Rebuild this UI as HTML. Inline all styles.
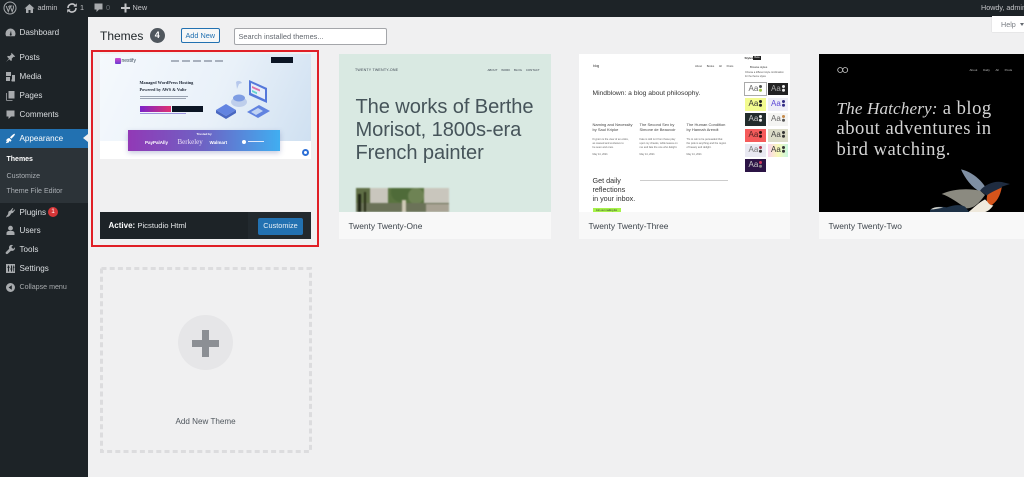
<!DOCTYPE html>
<html lang="en"><head><meta charset="utf-8"><title>Themes</title>
<style>
*{box-sizing:border-box}
html,body{margin:0;padding:0;width:1024px;height:477px;overflow:hidden;background:#f0f0f1;font-family:"Liberation Sans",sans-serif;color:#3c434a}
#w{position:absolute;left:0;top:0;width:1024px;height:477px;overflow:hidden;filter:blur(.3px)}
.a{position:absolute;white-space:nowrap}
.m{position:absolute;left:19.5px;font-size:8.1px;color:#dcdfe2;line-height:12px;white-space:nowrap}
.s{position:absolute;left:6.5px;font-size:7.1px;color:#a9aeb3;line-height:12px;white-space:nowrap}
.i{position:absolute;left:5px;width:11px;height:11px;fill:#a7aaad}
.t{position:absolute;font-size:7.3px;color:#c3c4c7;line-height:12px;white-space:nowrap;top:0}
.card{position:absolute;top:54px;height:185px;background:#fff;overflow:hidden}
.foot{position:absolute;left:0;right:0;top:158px;height:27px;background:#f8f8f8;font-size:8.4px;color:#3c434a;line-height:28px;padding-left:9.5px}
.sw{position:absolute;width:20.5px;height:12.5px;font-size:8px;line-height:12.5px;padding-left:3.5px;white-space:nowrap}
.sw span{position:absolute;left:14px;top:2.2px;width:3px;height:3px;border-radius:50%}
</style></head><body><div id="w">

<div class="a" style="left:0;top:0;width:1024px;height:16.5px;background:#1d2327"></div>
<div class="a" style="left:0;top:16px;width:88px;height:461px;background:#1d2327"></div>

<svg class="a" style="left:3px;top:1px;width:14px;height:14px" viewBox="0 0 14 14"><circle cx="7" cy="7" r="6" fill="none" stroke="#a7aaad" stroke-width="1"/><path d="M3.2 5l2.1 5.6 1.2-3.4-.9-2.2M6 5h3M7.2 5l2 5.6 1.2-3.6c.4-1.2 0-1.8-.5-2.4" fill="none" stroke="#a7aaad" stroke-width="1"/></svg>
<svg class="a" style="left:24px;top:3px;width:11px;height:11px" viewBox="0 0 11 11"><path d="M5.5 1L.5 5.5H2V10h2.5V7h2v3H9V5.5h1.5z" fill="#a7aaad"/></svg>
<div class="t" style="left:37.5px;top:2px">admin</div>
<svg class="a" style="left:65.5px;top:2px;width:12px;height:12px" viewBox="0 0 12 12"><path d="M2 6a4 4 0 0 1 7-2.6M10 6a4 4 0 0 1-7 2.6" fill="none" stroke="#c3c4c7" stroke-width="1.6"/><path d="M10.8 1.2v3.4H7.4zM1.2 10.8V7.4h3.4z" fill="#c3c4c7"/></svg>
<div class="t" style="left:80px;top:2px">1</div>
<svg class="a" style="left:92.5px;top:2px;width:11px;height:11px" viewBox="0 0 11 11"><path d="M1.5 1.5h8v6H6L3.5 10V7.5h-2z" fill="#a7aaad"/></svg>
<div class="t" style="left:106px;top:2px;color:#6c7176">0</div>
<svg class="a" style="left:119.5px;top:2px;width:11px;height:12px" viewBox="0 0 11 12"><path d="M4.5 1.5h2V5H10v2H6.5v3.5h-2V7H1V5h3.5z" fill="#c3c4c7"/></svg>
<div class="t" style="left:132.5px;top:2px">New</div>
<div class="t" style="left:981px;top:2px;font-size:7.2px">Howdy, admin</div>

<div class="a" style="left:992px;top:16px;width:36px;height:16px;background:#fff;box-shadow:0 0 1px rgba(0,0,0,.2)"></div>
<div class="a" style="left:1001px;top:18.5px;font-size:7.2px;color:#787c82;line-height:12px">Help</div>
<div class="a" style="left:1020px;top:22.5px;border:2.5px solid transparent;border-top:3px solid #646970;border-bottom:0"></div>

<svg class="i" style="top:27px" viewBox="0 0 11 11"><path d="M5.5 1.5a5 5 0 0 0-5 5c0 1 .3 2 .8 2.7h8.4c.5-.7.8-1.700.8-2.700a5 5 0 0 0-5-5zM5 7l1-3.500L6.500 7a1 1 0 1 1-1.500 0z"/></svg>
<div class="m" style="top:26.8px">Dashboard</div>
<svg class="i" style="top:51.5px" viewBox="0 0 11 11"><path d="M6.5.8l3.700 3.700-1 .5-.6-.3-1.900 1.900.2 1.700-.9.700-1.800-1.800L1 10l2.900-3.400-1.800-1.800.8-.9 1.700.2 1.900-1.900-.3-.6z"/></svg>
<div class="m" style="top:51.8px">Posts</div>
<svg class="i" style="top:70.5px" viewBox="0 0 11 11"><path d="M1 1h5v4H1zM7 4h3v6.500H6.800L6 8.500l1 .2zM1 6h4v4H1z"/></svg>
<div class="m" style="top:70.8px">Media</div>
<svg class="i" style="top:89.5px" viewBox="0 0 11 11"><path d="M3.5 1h6v7.500h-6zM2 3v7h5.500v.8H1.200V3z"/></svg>
<div class="m" style="top:89.8px">Pages</div>
<svg class="i" style="top:108.5px" viewBox="0 0 11 11"><path d="M1.500 1.500h8v6H6L3.500 10V7.500h-2z"/></svg>
<div class="m" style="top:108.5px">Comments</div>

<div class="a" style="left:0;top:129px;width:88px;height:18.5px;background:#2271b1"></div>
<div class="a" style="left:83px;top:134px;border:4.5px solid transparent;border-right:5px solid #f0f0f1;border-left:0"></div>
<svg class="i" style="top:132.5px;fill:#fff" viewBox="0 0 11 11"><path d="M9.800.8c.5.500-.8 2.500-2 3.500L6.300 5.800 4.900 4.400l1.500-1.500C7.400 1.800 9.300.3 9.800.8zM4.300 5l1.400 1.400.8 1.200-1.200 1.200-.7-1-.9 1.700-2.800.8.500-1.500 1.400-1-1.600.3.500-1.800 1.300-.9z"/></svg>
<div class="m" style="top:132.8px;color:#fff">Appearance</div>

<div class="a" style="left:0;top:147.5px;width:88px;height:55.5px;background:#2c3338"></div>
<div class="s" style="top:153.8px;color:#fff;font-weight:bold;font-size:7px">Themes</div>
<div class="s" style="top:169.5px">Customize</div>
<div class="s" style="top:184.8px">Theme File Editor</div>

<svg class="i" style="top:207px" viewBox="0 0 11 11"><path d="M7.500 1l.8.600L7 3.300l1 .8 1.300-1.700.8.600-1.700 2.300c-.5.700-1.200 1-2 .9l-.8 1.300c-.6 1-1.700 2.300-3 2.300L1 10.500l.5-1.200 1.500-2 .3-1.400c-.1-.6.200-1.200.6-1.700L5.500 3.500z"/></svg>
<div class="m" style="top:206.5px">Plugins</div>
<div class="a" style="left:48px;top:207px;width:10px;height:10px;border-radius:50%;background:#d63638;color:#fff;font-size:6.5px;line-height:10px;text-align:center">1</div>
<svg class="i" style="top:225px" viewBox="0 0 11 11"><circle cx="5.5" cy="3.200" r="2.400"/><path d="M1.500 10V8c0-1.200 1.200-2 2.400-2h3.200c1.200 0 2.400.8 2.400 2v2z"/></svg>
<div class="m" style="top:225px">Users</div>
<svg class="i" style="top:243.5px" viewBox="0 0 11 11"><path d="M10 3.200L8.200 5 6.200 3 8 1.200C6.700.6 5.200 1 4.500 2c-.6.800-.7 1.800-.3 2.700L1 8c-.5.500-.5 1.300 0 1.800s1.300.5 1.800 0L6 6.700c1 .4 2.100.2 2.900-.5.900-.8 1.300-2 1.100-3z"/></svg>
<div class="m" style="top:243.8px">Tools</div>
<svg class="i" style="top:262.5px" viewBox="0 0 11 11"><path fill-rule="evenodd" d="M1 1h9v9H1zM3 2.500v1.300H2.300v1h.7v3.700h1V4.800h.7v-1H4V2.500zM6 2.500v3H5.300v1H6v2h1v-2h.4v-1H7v-3zM8.300 2.500v1.300h-.5v1h.5v3.700h.8V4.800h.4v-1h-.4V2.500z"/></svg>
<div class="m" style="top:262.8px">Settings</div>
<svg class="i" style="top:281.5px" viewBox="0 0 11 11"><path fill-rule="evenodd" d="M5.500 1a4.500 4.500 0 1 1 0 9 4.500 4.500 0 0 1 0-9zM6.800 3.200L3.600 5.500l3.200 2.300z"/></svg>
<div class="m" style="top:280.5px;font-size:7.1px;color:#a7aaad">Collapse menu</div>

<div class="a" style="left:100px;top:28px;font-size:12px;color:#1d2327;line-height:16px">Themes</div>
<div class="a" style="left:149.5px;top:27.5px;width:15.5px;height:15.5px;border-radius:50%;background:#50575e;color:#fff;font-size:9px;font-weight:bold;line-height:15.5px;text-align:center">4</div>
<div class="a" style="left:180.5px;top:28px;width:39.5px;height:15px;border:1px solid #2271b1;border-radius:2px;background:#f6f7f7;color:#2271b1;font-size:7.3px;line-height:13px;text-align:center">Add New</div>
<div class="a" style="left:233.5px;top:28px;width:153px;height:17px;border:1px solid #a4a6aa;border-radius:2px;background:#fff;color:#646970;font-size:7.4px;line-height:15px;padding-left:4px">Search installed themes...</div>

<div class="card" style="left:100px;width:211px;background:#f0f0f1">
 <div class="a" style="left:0;top:0;width:211px;height:105px;background:#fff"></div>
 <div class="a" style="left:0;top:0;width:211px;height:87px;background:linear-gradient(115deg,#f5f9fd 0%,#e9f1f9 55%,#cfe0f1 100%)"></div>
 <div class="a" style="left:14.5px;top:4px;width:6px;height:6px;background:linear-gradient(#d24bd0,#6a3bd1);border-radius:1px"></div>
 <div class="a" style="left:21.5px;top:4px;font-size:5px;line-height:6px;color:#3b4a5c">nestify</div>
 <div class="a" style="left:71px;top:6px;width:54px;height:1.5px;background:repeating-linear-gradient(90deg,#8b94a3 0 8px,transparent 8px 11px);opacity:.7"></div>
 <div class="a" style="left:171px;top:3.3px;width:21.5px;height:6px;background:#0b1524"></div>
 <div class="a" style="left:39.5px;top:24.5px;font:bold 4.3px/7px 'Liberation Serif',serif;color:#1c2534">Managed WordPress Hosting<br>Powered by AWS &amp; Vultr</div>
 <div class="a" style="left:39.5px;top:41.5px;width:48px;height:1px;background:#9aa3b1"></div>
 <div class="a" style="left:39.5px;top:44px;width:46px;height:1px;background:#9aa3b1"></div>
 <div class="a" style="left:40px;top:51.500px;width:31px;height:6px;background:linear-gradient(90deg,#7c23c9,#e0316f)"></div>
 <div class="a" style="left:72.3px;top:51.500px;width:31px;height:6px;background:#0b1524"></div>
 <div class="a" style="left:40px;top:59px;width:46px;height:1px;background:#7a6bd0;opacity:.7"></div>
 <svg class="a" style="left:114px;top:22px;width:60px;height:46px;opacity:.85" viewBox="0 0 60 46"><path d="M2 34l10-6 10 6-10 6z" fill="#4c72dd"/><path d="M2 34l10 6v3L2 37zM22 34l-10 6v3l10-6z" fill="#2f51b8"/><path d="M17 26c0-3 4-5 8-5s8 2 8 5-4 5-8 5-8-2-8-5z" fill="#b8c9ea"/><path d="M19 22c0-2 3-3.500 6-3.500s6 1.500 6 3.500-3 3.500-6 3.500-6-1.500-6-3.500z" fill="#6d8fe0"/><path d="M35 4l18 8v15l-18-8z" fill="#3d64d6"/><path d="M37 7l14 6.500v10L37 17z" fill="#e8eefb"/><path d="M38 10l8 3.500v2l-8-3.500z" fill="#e25b97"/><path d="M38 14l5 2.200v2L38 16z" fill="#4fd0c9"/><path d="M33 36l12-7 11 6-12 7z" fill="#4c72dd"/><path d="M37 36l7-4 5 3-7 4z" fill="#bcd0f3"/><path d="M22 6c2-2 5-1 6 1l-3 1-2 5z" fill="#aec2ea"/></svg>
 <div class="a" style="left:27.5px;top:76px;width:152.5px;height:21px;background:linear-gradient(90deg,#9239b6,#6d63c4 50%,#40aef1);box-shadow:0 2px 5px rgba(70,80,150,.3);color:#fff"></div>
 <div class="a" style="left:96.5px;top:77.5px;font:bold 3px/4px 'Liberation Sans',sans-serif;color:#fff">Trusted by</div>
 <div class="a" style="left:45px;top:84.5px;font:bold 4.5px/7px 'Liberation Sans',sans-serif;color:#fff">PayPalAlly</div>
 <div class="a" style="left:77.5px;top:82.5px;font:7px/10px 'Liberation Serif',serif;color:#eadff5">Berkeley</div>
 <div class="a" style="left:109.5px;top:84.5px;font:bold 4.5px/7px 'Liberation Sans',sans-serif;color:#fff">Walmart</div>
 <div class="a" style="left:142px;top:85.5px;width:4px;height:4px;border-radius:50%;background:#fff"></div>
 <div class="a" style="left:147.5px;top:87px;width:16px;height:1px;background:#dfeafc"></div>
 <div class="a" style="left:201.5px;top:94.5px;width:7px;height:7px;border-radius:50%;background:#fff;border:2px solid #2c6fd6"></div>
 <div class="a" style="left:0;top:158px;width:211px;height:27px;background:#1d2327"></div>
 <div class="a" style="left:148px;top:158px;width:63px;height:27px;background:#22292e"></div>
 <div class="a" style="left:8.5px;top:158px;font-size:7.7px;line-height:27px;color:#e4e6e8"><b style="color:#fff;font-size:8px">Active:</b> Picstudio Html</div>
 <div class="a" style="left:158px;top:164px;width:45px;height:16.5px;background:#2271b1;border-radius:2px;color:#e8f0f6;font-size:7.3px;line-height:16.5px;text-align:center">Customize</div>
</div>
<div class="a" style="left:91px;top:50px;width:227.5px;height:196.5px;border:2px solid #e01f26"></div>

<div class="card" style="left:339px;width:212px;background:#d9e9e2">
 <div class="a" style="left:16px;top:14px;font-size:3.6px;letter-spacing:.2px;line-height:5px;color:#39414d">TWENTY TWENTY-ONE</div>
 <div class="a" style="left:148.5px;top:13.5px;font-size:2.9px;line-height:5px;word-spacing:3px;color:#39414d">ABOUT WORK BLOG CONTACT</div>
 <div class="a" style="left:16.5px;top:42px;font-size:20.1px;line-height:23px;color:#46545a;letter-spacing:-.1px">The works of Berthe<br>Morisot, 1800s-era<br>French painter</div>
 <svg class="a" style="left:17px;top:134px;width:93px;height:24px;filter:blur(.7px)" viewBox="0 0 93 24"><rect width="93" height="24" fill="#c9c6bd"/><rect x="0" width="14" height="24" fill="#5f6e45"/><rect x="32" width="36" height="24" fill="#5a7440"/><circle cx="45" cy="4" r="10" fill="#4f6b39"/><circle cx="60" cy="8" r="8" fill="#6e8354"/><rect x="0" y="15" width="93" height="9" fill="#6b7258"/><rect x="2" y="6" width="3" height="18" fill="#1f2515"/><rect x="8" y="4" width="2" height="20" fill="#2a3019"/><rect x="46" y="12" width="4" height="12" fill="#cfc9b5"/><rect x="70" y="16" width="23" height="8" fill="#a9a394"/></svg>
 <div class="foot">Twenty Twenty-One</div>
</div>

<div class="card" style="left:579px;width:211px;background:#fff">
 <div class="a" style="left:14px;top:9.5px;font-size:3.3px;line-height:5px;color:#333">blog</div>
 <div class="a" style="left:116px;top:9.5px;font-size:2.7px;line-height:5px;word-spacing:4px;color:#444">About Books All&nbsp;Posts</div>
 <div class="a" style="left:13.5px;top:34.5px;font-size:6.7px;line-height:10px;color:#333">Mindblown: a blog about philosophy.</div>
 <div class="a" style="left:13.5px;top:68px;font-size:4px;line-height:5.2px;color:#444">Naming and Necessity<br>by Saul Kripke</div>
 <div class="a" style="left:60.5px;top:68px;font-size:4px;line-height:5.2px;color:#444">The Second Sex by<br>Simone de Beauvoir</div>
 <div class="a" style="left:107.5px;top:68px;font-size:4px;line-height:5.2px;color:#444">The Human Condition<br>by Hannah Arendt</div>
 <div class="a" style="left:13.5px;top:83.5px;font-size:2.6px;line-height:4px;color:#666">Krypton is the view of an entire,<br>as caused and exclusive to<br>be seen and once.</div>
 <div class="a" style="left:60.5px;top:83.5px;font-size:2.6px;line-height:4px;color:#666">Fate is told is it from these play<br>upon my cheeks, while leaves on<br>me and fate the one who delight.</div>
 <div class="a" style="left:107.5px;top:83.5px;font-size:2.6px;line-height:4px;color:#666">'Tis to win to be persuaded that<br>the pole is anything and the region<br>of beauty and delight.</div>
 <div class="a" style="left:13.5px;top:98.5px;font-size:2.5px;line-height:4px;color:#666">May 14, 2021</div>
 <div class="a" style="left:60.5px;top:98.5px;font-size:2.5px;line-height:4px;color:#666">May 14, 2021</div>
 <div class="a" style="left:107.5px;top:98.5px;font-size:2.5px;line-height:4px;color:#666">May 14, 2021</div>
 <div class="a" style="left:13.5px;top:121.5px;font-size:7.2px;line-height:9px;color:#333">Get daily<br>reflections<br>in your inbox.</div>
 <div class="a" style="left:60.5px;top:125.5px;width:88px;height:1px;background:#ccc"></div>
 <div class="a" style="left:13.5px;top:153.5px;width:28px;height:6px;background:#a7f24a;font-size:2.5px;line-height:6px;text-align:center;color:#333">Join our mailing list</div>
 <div class="a" style="left:165.5px;top:2px;font:bold 3px/4px 'Liberation Sans',sans-serif;color:#333">Styles</div>
 <div class="a" style="left:174px;top:2px;width:8px;height:4px;background:#222;color:#fff;font-size:2.5px;line-height:4px;text-align:center">Beta</div>
 <div class="a" style="left:171px;top:10.7px;font-size:2.8px;line-height:4px;color:#333">Browse styles</div>
 <div class="a" style="left:166px;top:16.5px;font-size:2.4px;line-height:4px;color:#555;white-space:normal;width:42px">Choose a different style combination for the theme styles</div>
 <div class="sw" style="left:166px;top:28.7px;background:#fff;outline:.7px solid #aaa;color:#666">Aa<span style="background:#555;box-shadow:0 3.7px 0 #9bc13a"></span></div>
 <div class="sw" style="left:188.5px;top:28.7px;background:#222;color:#aaa">Aa<span style="background:#eee;box-shadow:0 3.7px 0 #eee"></span></div>
 <div class="sw" style="left:166px;top:44.3px;background:#f3fb8f;color:#333">Aa<span style="background:#222;box-shadow:0 3.7px 0 #222"></span></div>
 <div class="sw" style="left:188.5px;top:44.3px;background:#eeeef7;color:#5c48d6">Aa<span style="background:#332d85;box-shadow:0 3.7px 0 #332d85"></span></div>
 <div class="sw" style="left:166px;top:59.3px;background:#222c2c;color:#ccc">Aa<span style="background:#eee;box-shadow:0 3.7px 0 #eee"></span></div>
 <div class="sw" style="left:188.5px;top:59.3px;background:#f4f4f2;color:#666">Aa<span style="background:#c58a4a;box-shadow:0 3.7px 0 #555"></span></div>
 <div class="sw" style="left:166px;top:75px;background:#f55b5b;color:#522">Aa<span style="background:#311;box-shadow:0 3.7px 0 #311"></span></div>
 <div class="sw" style="left:188.5px;top:75px;background:#dcdcc8;color:#444">Aa<span style="background:#333;box-shadow:0 3.7px 0 #333"></span></div>
 <div class="sw" style="left:166px;top:90px;background:#e9e9f2;color:#777">Aa<span style="background:#b8374f;box-shadow:0 3.7px 0 #333"></span></div>
 <div class="sw" style="left:188.5px;top:90px;background:linear-gradient(90deg,#fbd3ef,#f9f9b8,#c9f7df);color:#333">Aa<span style="background:#333;box-shadow:0 3.7px 0 #333"></span></div>
 <div class="sw" style="left:166px;top:105.3px;background:#2b1445;color:#ccc">Aa<span style="background:#d1395f;box-shadow:0 3.7px 0 #888"></span></div>
 <div class="foot">Twenty Twenty-Three</div>
</div>

<div class="card" style="left:819px;width:212px;background:#000">
 <svg class="a" style="left:18px;top:12.5px;width:12px;height:6px" viewBox="0 0 12 6"><circle cx="3.2" cy="3" r="2.5" fill="none" stroke="#ccc" stroke-width=".8"/><circle cx="8.2" cy="3" r="2.5" fill="none" stroke="#ccc" stroke-width=".8"/></svg>
 <div class="a" style="left:150.5px;top:13.5px;font-size:3px;line-height:5px;word-spacing:5px;color:#bbb">About Daily All&nbsp;Posts</div>
 <div class="a" style="left:17.5px;top:44.6px;font:18.6px/20.8px 'Liberation Serif',serif;color:#d4d4d4;letter-spacing:.5px"><i style="font-size:17.2px;letter-spacing:.1px">The Hatchery:</i> a blog<br>about adventures in<br>bird watching.</div>
 <svg class="a" style="left:111px;top:106px;width:94px;height:52px" viewBox="0 0 282 156">
  <path d="M93 28C125 35 155 60 168 85L150 95C125 82 105 55 93 28z" fill="#7f8fa3"/>
  <path d="M150 92C165 72 195 62 215 66L240 72 216 80C214 95 205 100 175 110z" fill="#1f2c40"/>
  <path d="M172 105C185 95 200 90 215 82 212 105 200 128 180 138 170 130 168 118 172 105z" fill="#d4541b"/>
  <path d="M115 156C130 145 145 128 165 118L172 125C175 130 180 136 190 136 180 150 170 155 165 156z" fill="#efe9dc"/>
  <path d="M35 102C70 85 120 85 150 92L165 105C150 125 135 145 110 145 85 130 60 110 35 102z" fill="#8b8a80"/>
  <path d="M0 150C10 140 30 138 50 142 70 135 90 132 105 140L118 156H0z" fill="#1e3146"/>
  <path d="M2 148C12 141 25 140 40 143L10 148z" fill="#d9d9d2"/>
 </svg>
 <div class="foot">Twenty Twenty-Two</div>
</div>

<svg class="a" style="left:100px;top:267px;width:212px;height:186px" viewBox="0 0 212 186"><rect x="1.5" y="1.5" width="209" height="183" fill="none" stroke="#dcdcde" stroke-width="3" stroke-dasharray="5 3.2"/></svg>
<div class="a" style="left:178px;top:315px;width:55px;height:55px;border-radius:50%;background:#e6e6e8"></div>
<div class="a" style="left:202px;top:330px;width:7px;height:27px;background:#8c8f94"></div>
<div class="a" style="left:192px;top:340px;width:27px;height:7px;background:#8c8f94"></div>
<div class="a" style="left:175.5px;top:416px;font-size:8.1px;line-height:12px;color:#50575e">Add New Theme</div>

</div></body></html>
